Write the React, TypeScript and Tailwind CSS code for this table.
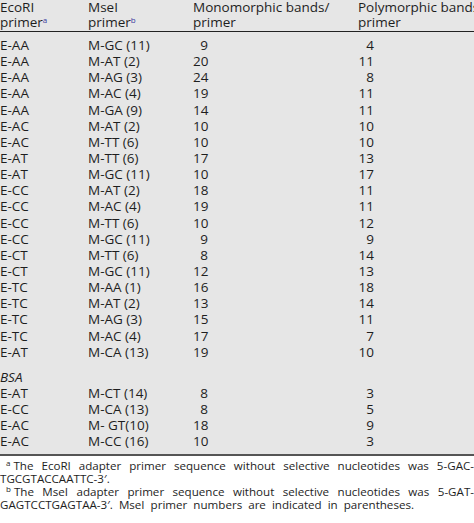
import React from 'react';

type Row = { e: string; m: string; mono: string; poly: string };

const mainRows: Row[] = [
  { e: 'E-AA', m: 'M-GC (11)', mono: '9', poly: '4' },
  { e: 'E-AA', m: 'M-AT (2)', mono: '20', poly: '11' },
  { e: 'E-AA', m: 'M-AG (3)', mono: '24', poly: '8' },
  { e: 'E-AA', m: 'M-AC (4)', mono: '19', poly: '11' },
  { e: 'E-AA', m: 'M-GA (9)', mono: '14', poly: '11' },
  { e: 'E-AC', m: 'M-AT (2)', mono: '10', poly: '10' },
  { e: 'E-AC', m: 'M-TT (6)', mono: '10', poly: '10' },
  { e: 'E-AT', m: 'M-TT (6)', mono: '17', poly: '13' },
  { e: 'E-AT', m: 'M-GC (11)', mono: '10', poly: '17' },
  { e: 'E-CC', m: 'M-AT (2)', mono: '18', poly: '11' },
  { e: 'E-CC', m: 'M-AC (4)', mono: '19', poly: '11' },
  { e: 'E-CC', m: 'M-TT (6)', mono: '10', poly: '12' },
  { e: 'E-CC', m: 'M-GC (11)', mono: '9', poly: '9' },
  { e: 'E-CT', m: 'M-TT (6)', mono: '8', poly: '14' },
  { e: 'E-CT', m: 'M-GC (11)', mono: '12', poly: '13' },
  { e: 'E-TC', m: 'M-AA (1)', mono: '16', poly: '18' },
  { e: 'E-TC', m: 'M-AT (2)', mono: '13', poly: '14' },
  { e: 'E-TC', m: 'M-AG (3)', mono: '15', poly: '11' },
  { e: 'E-TC', m: 'M-AC (4)', mono: '17', poly: '7' },
  { e: 'E-AT', m: 'M-CA (13)', mono: '19', poly: '10' }
];

const bsaRows: Row[] = [
  { e: 'E-AT', m: 'M-CT (14)', mono: '8', poly: '3' },
  { e: 'E-CC', m: 'M-CA (13)', mono: '8', poly: '5' },
  { e: 'E-AC', m: 'M- GT(10)', mono: '18', poly: '9' },
  { e: 'E-AC', m: 'M-CC (16)', mono: '10', poly: '3' }
];

const cols = 'grid grid-cols-[88px_105px_165px_116px]';

const DataRow = ({ row }: { row: Row }) => (
  <div className={`${cols} h-[16.15px] items-center`}>
    <div>{row.e}</div>
    <div>{row.m}</div>
    <div>
      <div className="w-[15px] text-right">{row.mono}</div>
    </div>
    <div>
      <div className="w-[16px] text-right">{row.poly}</div>
    </div>
  </div>
);

const Sup = ({ children, className = '' }: { children: React.ReactNode; className?: string }) => (
  <span className={`relative -top-[4px] text-[8px] leading-none ${className}`}>{children}</span>
);

export default function App() {
  return (
    <div
      className="w-[474px] h-[523px] overflow-hidden bg-white text-[#1e1e1e]"
      style={{ fontFamily: '"Open Sans", "DejaVu Sans", sans-serif' }}
    >
      {/* Table */}
      <div className="bg-[#e6e6e6] text-[13.5px] leading-[16px]">
        <div className={`${cols} leading-[15px] pb-[1px] whitespace-nowrap`}>
          <div>
            EcoRI
            <br />
            primer<Sup className="text-[#3a3aa0]">a</Sup>
          </div>
          <div>
            MseI
            <br />
            primer<Sup className="text-[#3a3aa0]">b</Sup>
          </div>
          <div>
            Monomorphic bands/
            <br />
            primer
          </div>
          <div>
            Polymorphic bands/
            <br />
            primer
          </div>
        </div>
        <div className="border-t border-[#222] pt-[5px] pb-[4px]">
          {mainRows.map((r, i) => (
            <DataRow key={i} row={r} />
          ))}
          <div className="h-[16.15px] mt-[9px] flex items-center italic">BSA</div>
          {bsaRows.map((r, i) => (
            <DataRow key={i} row={r} />
          ))}
        </div>
      </div>
      <div className="border-t-2 border-[#555]" />

      {/* Footnotes */}
      <div className="text-[11.6px] leading-[13px] pt-[3px]">
        <div className="pl-[6px] text-justify [text-align-last:justify] whitespace-nowrap">
          <Sup className="mr-[3px]">a</Sup>The EcoRI adapter primer sequence without selective nucleotides was 5-GAC-
        </div>
        <div>TGCGTACCAATTC-3′.</div>
        <div className="pl-[6px] text-justify [text-align-last:justify] whitespace-nowrap">
          <Sup className="mr-[3px]">b</Sup>The MseI adapter primer sequence without selective nucleotides was 5-GAT-
        </div>
        <div className="[word-spacing:3px]">GAGTCCTGAGTAA-3′. MseI primer numbers are indicated in parentheses.</div>
      </div>
    </div>
  );
}
